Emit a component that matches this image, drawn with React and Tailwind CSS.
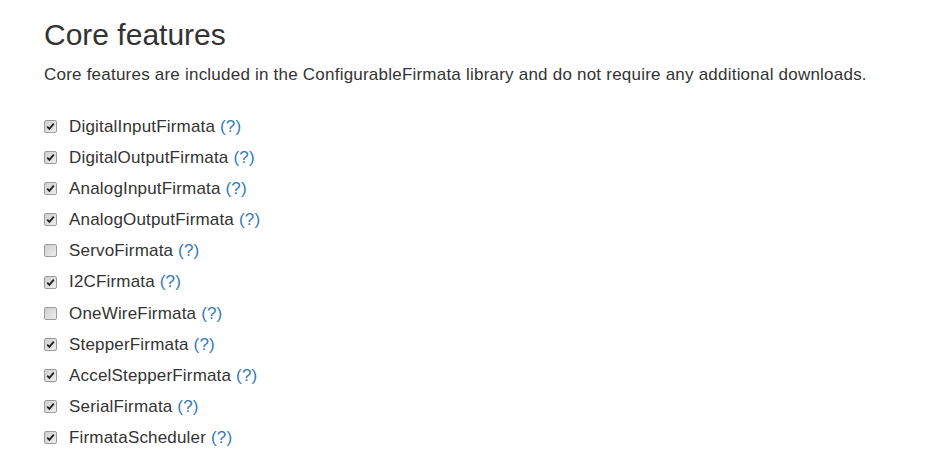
import React from 'react';

const FEATURES = [
  { name: 'DigitalInputFirmata', checked: true },
  { name: 'DigitalOutputFirmata', checked: true },
  { name: 'AnalogInputFirmata', checked: true },
  { name: 'AnalogOutputFirmata', checked: true },
  { name: 'ServoFirmata', checked: false },
  { name: 'I2CFirmata', checked: true },
  { name: 'OneWireFirmata', checked: false },
  { name: 'StepperFirmata', checked: true },
  { name: 'AccelStepperFirmata', checked: true },
  { name: 'SerialFirmata', checked: true },
  { name: 'FirmataScheduler', checked: true },
];

// Old-school grey checkbox, like the default Windows one
function Checkbox({ checked }) {
  return (
    <span className="inline-flex h-[13px] w-[13px] items-center justify-center rounded-[2px] border border-[#9c9c9c] bg-gradient-to-br from-[#cfcfcf] to-[#eeeeee]">
      {checked && (
        <svg width="9" height="9" viewBox="0 0 9 9">
          <path d="M1.2 4.6 L3.4 6.9 L7.8 1.6" fill="none" stroke="#222" strokeWidth="1.8" />
        </svg>
      )}
    </span>
  );
}

export default function App() {
  return (
    <div className="min-h-[471px] bg-white pl-[44px] pt-[18px] text-[17px] text-[#333] [font-family:'Liberation_Sans',Arial,sans-serif]">
      <h2 className="text-[30px] font-medium leading-[33px]">Core features</h2>
      <p className="mt-[12px] leading-[24px] tracking-[0.22px]">
        Core features are included in the ConfigurableFirmata library and do not require any additional downloads.
      </p>
      <div className="mt-[24px]">
        {FEATURES.map((f) => (
          <div key={f.name} className="flex h-[31.1px] items-center">
            <Checkbox checked={f.checked} />
            <span className="ml-[12px] leading-[31.1px] tracking-[0.18px]">
              {f.name} <a href="#" className="text-[#337ab7]">(?)</a>
            </span>
          </div>
        ))}
      </div>
    </div>
  );
}
